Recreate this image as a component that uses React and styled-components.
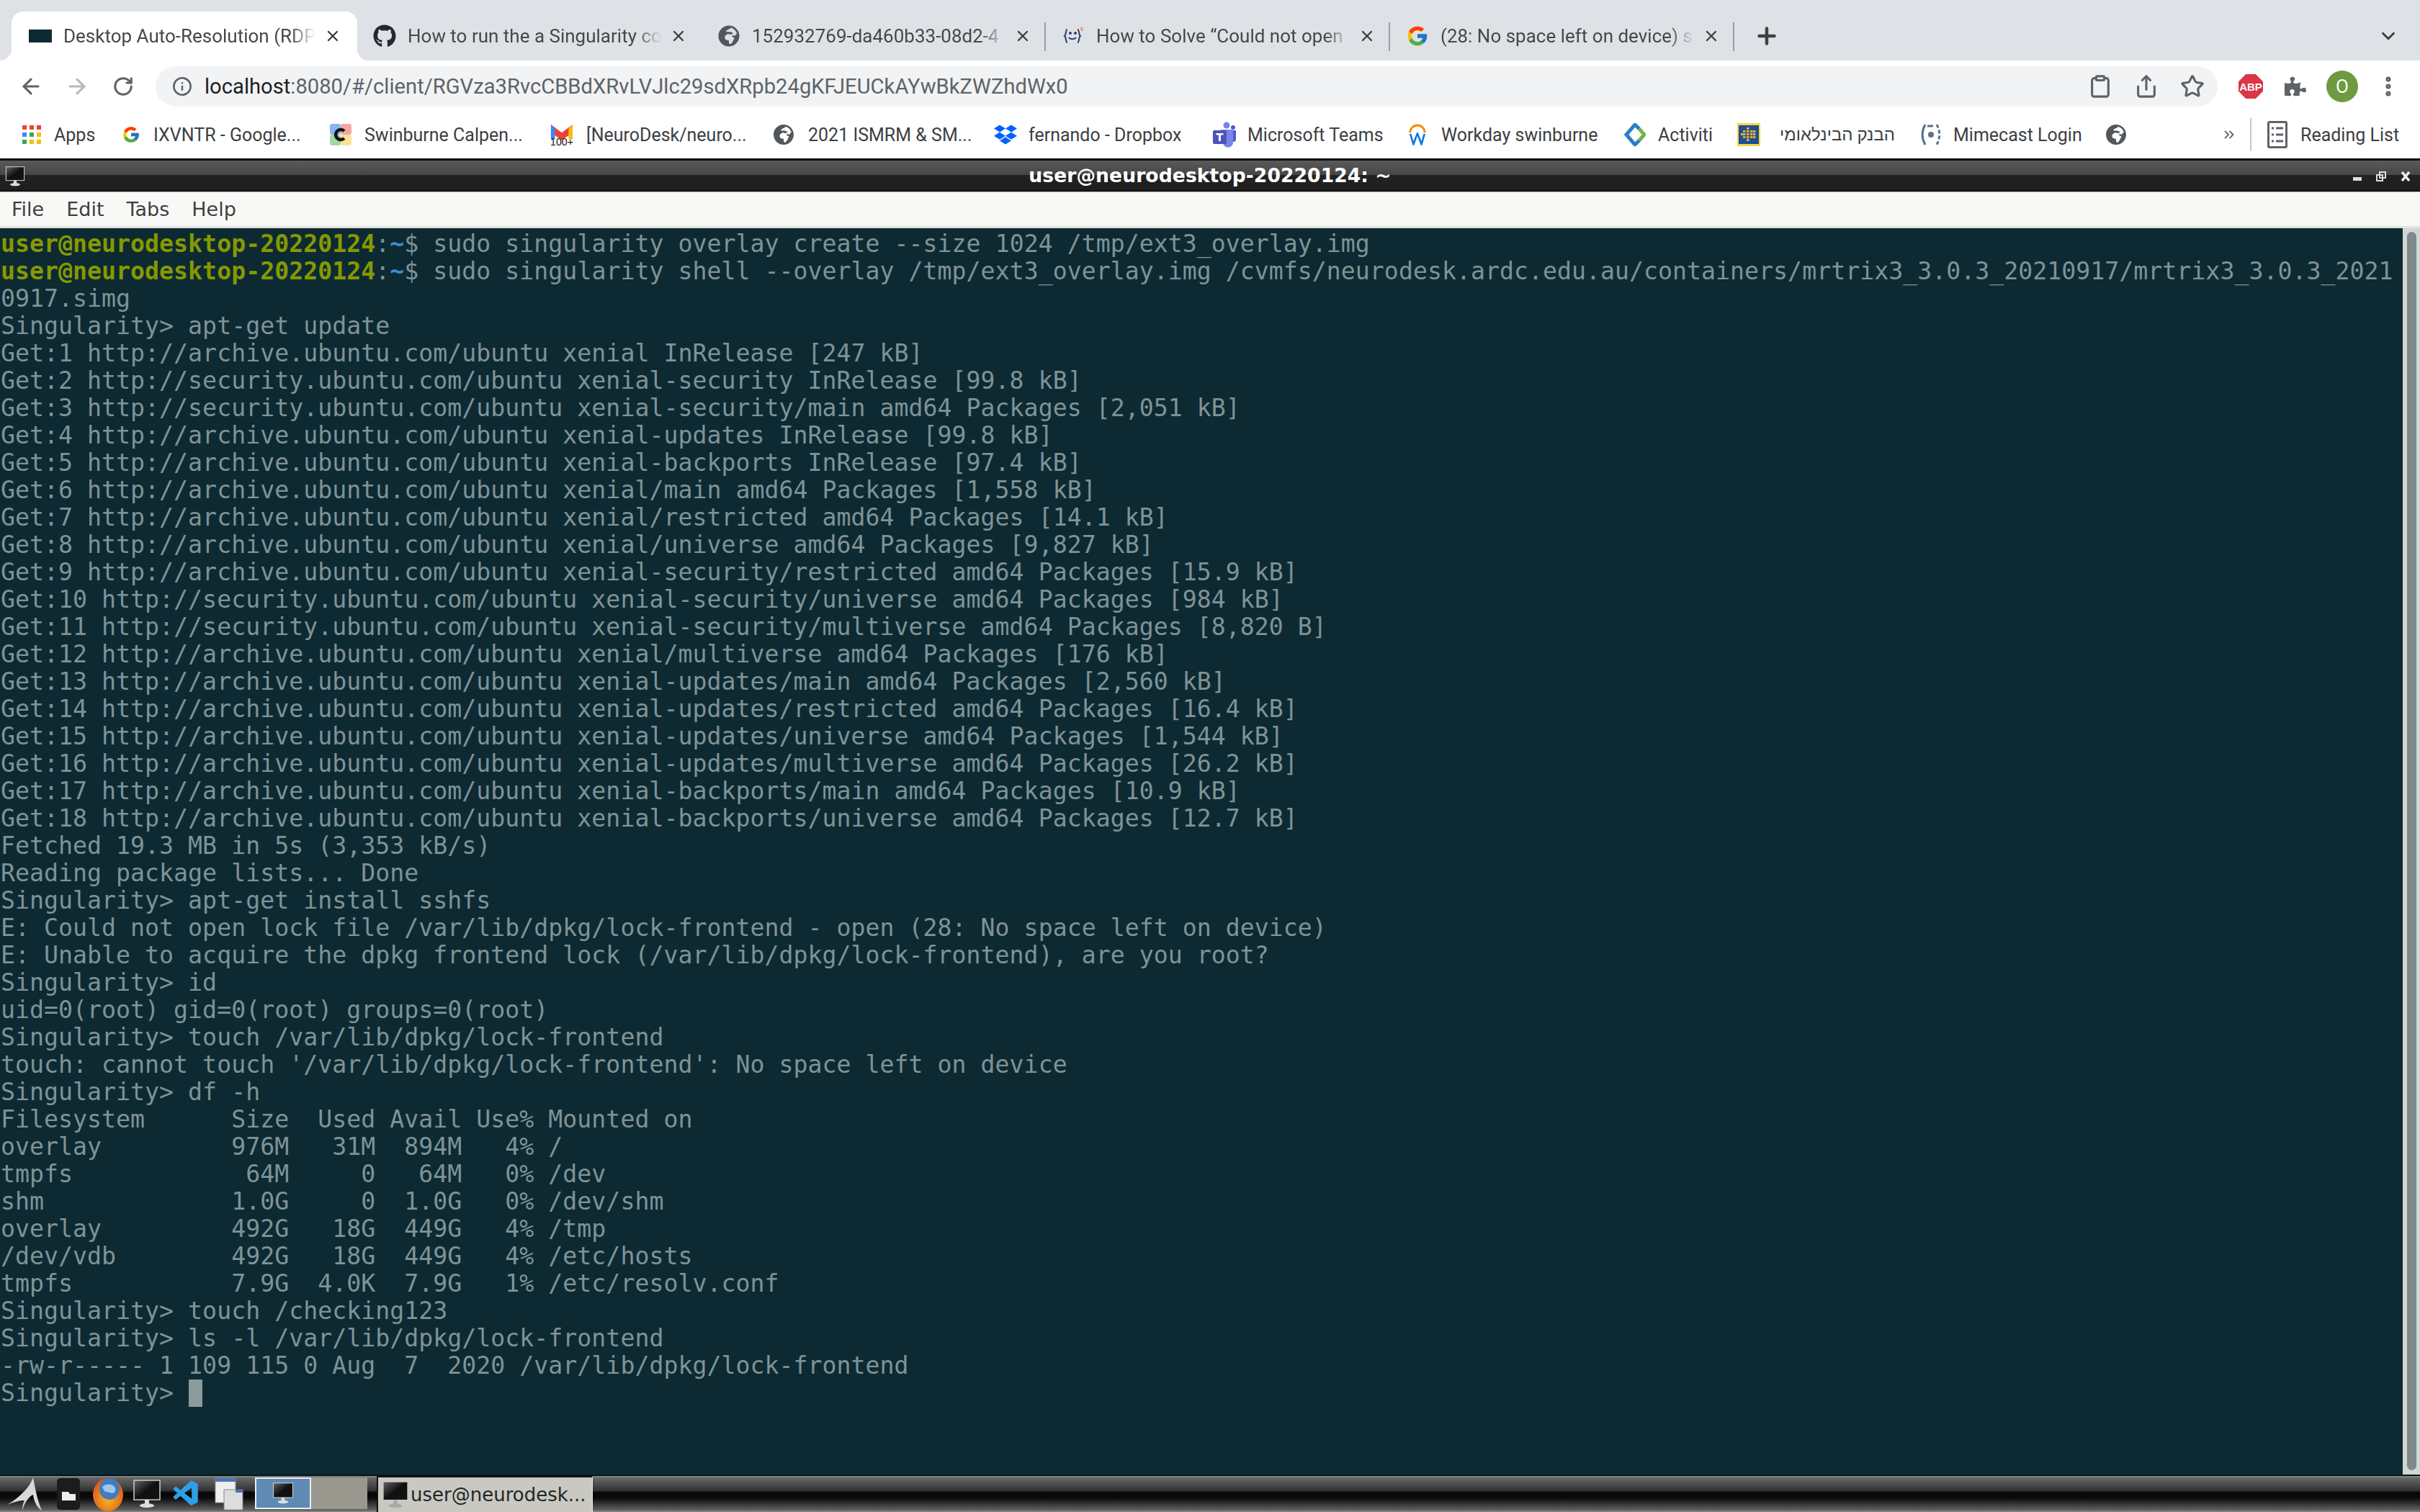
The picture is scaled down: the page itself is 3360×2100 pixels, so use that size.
import React from "react";
import styled, { createGlobalStyle } from "styled-components";
import { ArrowLeft, ArrowRight, RotateCw, Info, Plus, X, ChevronDown, Star, Share, Clipboard, EllipsisVertical, ChevronsRight } from "lucide-react";
import { FaGithub, FaGlobeAfrica, FaPuzzlePiece, FaDropbox } from "react-icons/fa";
import { FcGoogle } from "react-icons/fc";
import { VscVscode } from "react-icons/vsc";

const Global = createGlobalStyle`
  html, body { margin: 0; padding: 0; background: #0d2a33; }
  #root { width: 3360px; height: 2100px; overflow: hidden; }
`;

const Page = styled.div`
  width: 3360px; height: 2100px; display: flex; flex-direction: column;
  font-family: Roboto, "Liberation Sans", sans-serif;
`;
const TabStrip = styled.div`
  height: 84px; background: #dee1e6; display: flex; align-items: flex-end; padding-left: 16px; box-sizing: border-box;
`;
const Tab = styled.div`
  position: relative; width: ${p => p.$active ? 480 : 478}px; height: 68px; box-sizing: border-box;
  padding: 0 ${p => p.$active ? 22 : 20}px 0 ${p => p.$active ? 24 : 22}px;
  display: flex; align-items: center; gap: 16px;
  background: ${p => p.$active ? "#fff" : "transparent"};
  border-radius: 16px 16px 0 0;
  color: #45474b;
  ${p => p.$active && `
    &::before, &::after { content: ""; position: absolute; bottom: 0; width: 16px; height: 16px; background: radial-gradient(circle at var(--cx) 0, #dee1e6 15.5px, #fff 16.5px); }
    &::before { left: -16px; --cx: 0; }
    &::after { right: -16px; --cx: 100%; }
  `}
  ${p => p.$sep && `
    &::after { content: ""; position: absolute; right: 0; top: 15px; height: 40px; width: 2px; background: #9c9fa4; }
  `}
`;
const TabIcon = styled.span`
  width: 32px; height: 32px; flex: none; display: flex; align-items: center; justify-content: center;
`;
const TabTitle = styled.span`
  flex: 1; min-width: 0; white-space: nowrap; font-size: 26px; color: #45474b;
  -webkit-mask-image: linear-gradient(to right, #000 90%, transparent 100%);
  mask-image: linear-gradient(to right, #000 90%, transparent 100%);
`;
const TabClose = styled.span`
  width: 24px; flex: none; display: flex; justify-content: center; color: #3c4043; margin-left: -4px;
`;
const NewTab = styled.div`
  margin-left: 27px; height: 68px; display: flex; align-items: center; color: #3c4043;
`;
const Spacer = styled.div`flex: 1;`;
const StripEnd = styled.div`
  height: 68px; display: flex; align-items: center; color: #3c4043; padding-right: 29px;
`;

const Toolbar = styled.div`
  height: 64px; background: #fff; display: flex; align-items: flex-start; box-sizing: border-box; padding-top: 8px;
`;
const NavBtn = styled.div`
  width: 64px; height: 56px; display: flex; align-items: center; justify-content: center; color: ${p => p.$dim ? "#b6b8bb" : "#5f6368"};
`;
const NavGroup = styled.div`
  display: flex; padding-left: 11px; width: 216px; box-sizing: border-box; flex: none;
`;
const Omnibox = styled.div`
  width: 2863px; height: 56px; border-radius: 28px; background: #f1f3f4; display: flex; align-items: center; flex: none;
  padding: 0 18px 0 23px; box-sizing: border-box; color: #5f6368;
`;
const Url = styled.div`
  flex: 1; margin-left: 17px; font-size: 29.2px; color: #5f6368; white-space: nowrap; b { font-weight: 400; color: #202124; }
`;
const OmniActions = styled.div`display: flex; gap: 30px; align-items: center;`;
const ExtGroup = styled.div`
  flex: 1; display: flex; align-items: center; height: 56px; gap: 30px; padding-left: 29px;
`;
const Abp = styled.div`
  width: 34px; height: 34px; background: #dc3545; color: #fff; display: flex; align-items: center; justify-content: center;
  clip-path: polygon(30% 0, 70% 0, 100% 30%, 100% 70%, 70% 100%, 30% 100%, 0 70%, 0 30%);
  font: 700 15px "Liberation Sans", sans-serif;
`;
const Avatar = styled.div`
  width: 44px; height: 44px; border-radius: 50%; background: #6f9a41; color: #fff; display: flex; align-items: center; justify-content: center;
  font-size: 26px; margin: 0 -5px 0 -2px;
`;

const Bookmarks = styled.div`
  height: 72px; background: #fff; display: flex; align-items: center; padding: 6px 0 0 31px; box-sizing: border-box; color: #3c4043;
`;
const Bm = styled.div`
  display: flex; align-items: center; gap: ${p => p.$gap ?? 18}px; margin-right: ${p => p.$mr ?? 34}px; font-size: 25px; white-space: nowrap; flex: none;
`;
const BmIcon = styled.span`
  width: ${p => p.$w ?? 30}px; height: 32px; flex: none; display: flex; align-items: center; justify-content: center;
`;
const BmText = styled.span`
  width: ${p => p.$w}px; color: #3c4043; white-space: nowrap; direction: ${p => p.$rtl ? "rtl" : "ltr"};
  font-size: ${p => p.$rtl ? "24px" : "inherit"};
`;
const BmSep = styled.div`width: 2px; height: 46px; background: #c4c7c9; margin: 0 22px 0 18px;`;
const More = styled.div`color: #5f6368; flex: none; margin-left: auto; display: flex;`;

const Desktop = styled.div`
  flex: 1; display: flex; flex-direction: column; min-height: 0;
`;
const WindowTitle = styled.div`
  height: 46px; box-sizing: border-box; border-top: 3px solid #0c0c0c; border-bottom: 2px solid #111;
  position: relative; display: flex; align-items: center; justify-content: center;
  background: linear-gradient(#5a5a5a 0, #464646 48%, #222 50%, #1e1e1e 100%);
  color: #fff; font: 700 26.7px "DejaVu Sans", sans-serif; box-shadow: 0 1px 0 #b4b4b4;
`;
const WinIcon = styled.span`position: absolute; left: 7px; top: 8px; display: flex;`;
const WinBtns = styled.span`position: absolute; right: 13px; top: 15px; display: flex; gap: 20px; align-items: center;`;
const MenuBar = styled.div`
  height: 50px; box-sizing: border-box; margin-top: 1px; background: #f8f9f6; border-bottom: 3px solid #e3e4e1; display: flex; align-items: center; gap: 31px;
  padding-left: 16px; font: 400 27px "DejaVu Sans", sans-serif; color: #3f3f3f;
`;
const TermArea = styled.div`
  flex: 1; min-height: 0; display: flex; background: #0d2a33; border-bottom: 2px solid #06141a;
`;
const Term = styled.pre`
  flex: 1; margin: 0; padding: 3px 0 0 1px; font: 400 33.24px/38px "DejaVu Sans Mono", monospace; color: #7f9396; overflow: hidden;
`;
const U = styled.span`color: #859900; font-weight: 700;`;
const B = styled.span`color: #3c8dd0; font-weight: 700;`;
const Cursor = styled.span`
  display: inline-block; width: 19px; height: 38px; background: #8b9a9b; vertical-align: top; margin-left: 1px;
`;
const ScrollTrack = styled.div`
  width: 24px; background: #d3d5d2; padding: 5px 5px 6px 6px; box-sizing: border-box; display: flex;
`;
const ScrollThumb = styled.div`
  flex: 1; border-radius: 7px; background: #7e8a8b;
`;
const Panel = styled.div`
  height: 50px; flex: none; display: flex; align-items: stretch;
  background: linear-gradient(#8a8a8a 0, #666 3px, #333 20px, #070707 23px, #0a0a0a 30px, #5e5e5e 47px, #8f8f8f 50px);
  padding-left: 8px; box-sizing: border-box;
`;
const PanelIcon = styled.div`
  width: ${p => p.$w}px; margin-right: ${p => p.$mr ?? 0}px; flex: none; display: flex; align-items: center; justify-content: center;
`;
const Pager = styled.div`
  width: 78px; margin: 2px 0 4px; flex: none; box-sizing: border-box;
  background: ${p => p.$active ? "#5e8ab4" : "#98988e"}; border: ${p => p.$active ? "2px solid #e8eef4" : "0"};
  display: flex; align-items: center; justify-content: center;
`;
const TaskBtn = styled.div`
  width: 300px; margin-left: 13px; background: #c9c9c1; border-top: 2px solid #111; border-left: 2px solid #111; border-right: 1px solid #eee;
  box-sizing: border-box; display: flex; align-items: center; padding-left: 5px; gap: 2px;
  font: 400 26px "DejaVu Sans", sans-serif; color: #22262b; white-space: nowrap;
`;

const Monitor = ({ s = 40, stand = "#ddd" }) => (
  <svg width={s} height={s} viewBox="0 0 40 40">
    <defs><linearGradient id="mon" x1="0" y1="0" x2="1" y2="1"><stop offset="0" stopColor="#666" /><stop offset=".5" stopColor="#111" /></linearGradient></defs>
    <rect x="2" y="1" width="36" height="27" fill="url(#mon)" stroke="#ccc" strokeWidth="1.5" />
    <rect x="17" y="28" width="6" height="6" fill={stand} />
    <ellipse cx="20" cy="36" rx="10" ry="3" fill={stand} />
  </svg>
);

const Globe = ({ s = 30 }) => <FaGlobeAfrica size={s} color="#53575c" />;

const GmailIcon = () => (
  <svg width="34" height="34" viewBox="0 0 34 34">
    <path d="M1 2 L17 14 L33 2 V14 L17 25 L1 14Z" fill="#ea4335" />
    <path d="M1 2v22h6V8z" fill="#4285f4" />
    <path d="M33 2v22h-6V8z" fill="#fbbc04" />
    <text x="17" y="33" textAnchor="middle" fontFamily="Liberation Sans" fontSize="15" fill="#111">100+</text>
  </svg>
);
const AppsIcon = () => (
  <svg width="26" height="26" viewBox="0 0 26 26">
    {[["#ea4335", "#ea4335", "#ea4335"], ["#4285f4", "#34a853", "#fbbc04"], ["#34a853", "#fbbc04", "#fbbc04"]].map((r, j) => r.map((c, i) => (
      <rect key={`${i}${j}`} x={i * 10} y={j * 10} width="6" height="6" fill={c} />
    )))}
  </svg>
);
const CalIcon = () => (
  <svg width="30" height="30" viewBox="0 0 30 30">
    <rect width="15" height="15" rx="3" fill="#8ab4f8" /><rect x="15" width="15" height="15" rx="3" fill="#f4a7a0" />
    <rect y="15" width="15" height="15" rx="3" fill="#a5d6a7" /><rect x="15" y="15" width="15" height="15" rx="3" fill="#fde293" />
    <path d="M20 10a7 7 0 1 0 0 10" fill="none" stroke="#111" strokeWidth="4.5" />
  </svg>
);
const TeamsIcon = () => (
  <svg width="32" height="36" viewBox="0 0 32 36">
    <circle cx="19" cy="5" r="4.5" fill="#7b83eb" /><circle cx="28" cy="8" r="3" fill="#5059c9" />
    <path d="M24 12h8v12a4 4 0 0 1-8 0z" fill="#5059c9" /><path d="M11 11h17v16a7 7 0 0 1-14 3H11z" fill="#7b83eb" />
    <rect x="0" y="12" width="19" height="19" rx="2" fill="#4b53bc" />
    <path d="M4.5 16h10v2.5h-3.5V27H8v-8.500H4.500z" fill="#fff" />
  </svg>
);
const WorkdayIcon = () => (
  <svg width="28" height="34" viewBox="0 0 28 34">
    <path d="M3 14a11 11 0 0 1 22 0" fill="none" stroke="#f38b00" strokeWidth="3" />
    <path d="M2 16l5 17h2l5-14 5 14h2l5-17h-3l-3 11-5-13h-2l-5 13-3-11z" fill="#0875e1" />
  </svg>
);
const ActivitiIcon = () => (
  <svg width="30" height="32" viewBox="0 0 30 32" fill="none" strokeWidth="5">
    <path d="M21 8L15 2 3 16l12 14 6-6" stroke="#2b7ec7" />
    <path d="M21 8l7 8-7 8" stroke="#6fb548" />
  </svg>
);
const BankIcon = () => (
  <svg width="32" height="32" viewBox="0 0 32 32">
    <rect width="32" height="32" fill="#f6d54a" /><rect x="2" y="3" width="28" height="26" fill="#1c4f93" />
    <g fill="#e8a93a">
      {[[13, 6], [13, 10], [13, 14], [13, 18], [13, 22], [8, 10], [8, 14], [8, 18], [18, 10], [18, 14], [18, 18], [5, 14], [22, 14], [22, 10], [22, 18]].map(([x, y]) => <rect key={`${x}-${y}`} x={x} y={y} width="3.500" height="3" />)}
    </g>
  </svg>
);
const MimecastIcon = () => (
  <svg width="28" height="34" viewBox="0 0 28 34" fill="none" stroke="#5c7186" strokeWidth="3">
    <path d="M6 3C1 12 1 22 6 31" /><path d="M22 3c5 9 5 19 0 28" strokeDasharray="5 3" /><path d="M9 5h8" />
    <circle cx="14" cy="17" r="4" fill="#5c7186" stroke="none" />
  </svg>
);
const ReadingIcon = () => (
  <svg width="28" height="38" viewBox="0 0 28 38" fill="none" stroke="#5f6368" strokeWidth="3">
    <rect x="1.500" y="1.500" width="25" height="35" rx="1.500" />
    <path d="M6 10h3M12 10h10M6 19h3M12 19h10M6 28h3M12 28h10" />
  </svg>
);
const SoIcon = () => (
  <svg width="32" height="32" viewBox="0 0 32 32" fill="none" stroke="#2c3e66" strokeWidth="2">
    <path d="M8 7c-3 0-1 7-4 9 3 2 1 9 4 9M22 7c3 0 1 7 4 9-3 2-1 9-4 9" />
    <path d="M10 18c2 3 8 3 10 0" /><circle cx="12" cy="12" r="1" /><circle cx="19" cy="12" r="1" />
    <path d="M26 1l1 4 3-2-2 4 3 1-4 1z" fill="#f27f2c" stroke="none" />
  </svg>
);
const ArrowLogo = () => (
  <svg width="56" height="46" viewBox="0 0 56 46">
    <path d="M38 0C34 12 22 26 2 38c12-5 18-6 24-6-2 4-3 8-3 14 3-12 10-20 15-22 1 10 6 18 12 22-6-14-9-30-12-46z" fill="#d8d8d8" />
  </svg>
);
const FileMgr = () => (
  <svg width="34" height="46" viewBox="0 0 34 46">
    <rect x="1" y="1" width="32" height="44" rx="5" fill="#1c1c1c" />
    <path d="M8 20h9l2 3h8v9H8z" fill="#eee" />
  </svg>
);
const FirefoxIcon = () => (
  <svg width="44" height="48" viewBox="0 0 44 48">
    <defs><radialGradient id="ff" cx=".5" cy=".65" r=".7"><stop offset="0" stopColor="#f5b324" /><stop offset="1" stopColor="#d8491b" /></radialGradient></defs>
    <ellipse cx="22" cy="25" rx="21" ry="23" fill="url(#ff)" />
    <ellipse cx="24" cy="17" rx="14" ry="15" fill="#3f7cc2" />
    <path d="M14 14c6-6 16-4 18 2s-4 8-8 6-6 2-10-8z" fill="#9ec6ea" />
  </svg>
);
const WindowsIcon = () => (
  <svg width="40" height="46" viewBox="0 0 40 46">
    <rect x="1" y="1" width="28" height="34" fill="#eee" stroke="#999" />
    <rect x="1" y="1" width="28" height="5" fill="#4a74b4" />
    <rect x="13" y="17" width="26" height="28" fill="#ddd" stroke="#888" />
    <rect x="29" y="17" width="10" height="4" fill="#4a74b4" />
  </svg>
);

const tabs = [
  { title: "Desktop Auto-Resolution (RDP", active: true, icon: <svg width="32" height="18"><rect width="32" height="18" fill="#0d2a33" /></svg> },
  { title: "How to run the a Singularity co", icon: <FaGithub size={32} color="#24292f" /> },
  { title: "152932769-da460b33-08d2-4", sep: true, icon: <Globe />, },
  { title: "How to Solve “Could not open", sep: true, icon: <SoIcon /> },
  { title: "(28: No space left on device) s", sep: true, icon: <FcGoogle size={32} /> },
];

const marks = [
  { t: "Apps", i: <AppsIcon />, w: 26, tw: 57, mr: 37 },
  { t: "IXVNTR - Google...", i: <FcGoogle size={28} />, w: 26, tw: 211, mr: 34 },
  { t: "Swinburne Calpen...", i: <CalIcon />, w: 30, tw: 224, mr: 34 },
  { t: "[NeuroDesk/neuro...", i: <GmailIcon />, w: 32, tw: 224, mr: 36 },
  { t: "2021 ISMRM & SM...", i: <Globe />, w: 28, tw: 225, mr: 33, gap: 20 },
  { t: "fernando - Dropbox", i: <FaDropbox size={32} color="#0061fe" />, w: 32, tw: 222, mr: 34, gap: 16 },
  { t: "Microsoft Teams", i: <TeamsIcon />, w: 32, tw: 187, mr: 36, gap: 16 },
  { t: "Workday swinburne", i: <WorkdayIcon />, w: 26, tw: 221, mr: 33, gap: 20 },
  { t: "Activiti", i: <ActivitiIcon />, w: 30, tw: 77, mr: 33, gap: 17 },
  { t: "הבנק הבינלאומי", i: <BankIcon />, w: 32, tw: 171, mr: 36, gap: 16, rtl: true },
  { t: "Mimecast Login", i: <MimecastIcon />, w: 28, tw: 178, mr: 34, gap: 17 },
];

const lines = [
  ["p", " sudo singularity overlay create --size 1024 /tmp/ext3_overlay.img"],
  ["p", " sudo singularity shell --overlay /tmp/ext3_overlay.img /cvmfs/neurodesk.ardc.edu.au/containers/mrtrix3_3.0.3_20210917/mrtrix3_3.0.3_2021"],
  "0917.simg",
  "Singularity> apt-get update",
  "Get:1 http://archive.ubuntu.com/ubuntu xenial InRelease [247 kB]",
  "Get:2 http://security.ubuntu.com/ubuntu xenial-security InRelease [99.8 kB]",
  "Get:3 http://security.ubuntu.com/ubuntu xenial-security/main amd64 Packages [2,051 kB]",
  "Get:4 http://archive.ubuntu.com/ubuntu xenial-updates InRelease [99.8 kB]",
  "Get:5 http://archive.ubuntu.com/ubuntu xenial-backports InRelease [97.4 kB]",
  "Get:6 http://archive.ubuntu.com/ubuntu xenial/main amd64 Packages [1,558 kB]",
  "Get:7 http://archive.ubuntu.com/ubuntu xenial/restricted amd64 Packages [14.1 kB]",
  "Get:8 http://archive.ubuntu.com/ubuntu xenial/universe amd64 Packages [9,827 kB]",
  "Get:9 http://archive.ubuntu.com/ubuntu xenial-security/restricted amd64 Packages [15.9 kB]",
  "Get:10 http://security.ubuntu.com/ubuntu xenial-security/universe amd64 Packages [984 kB]",
  "Get:11 http://security.ubuntu.com/ubuntu xenial-security/multiverse amd64 Packages [8,820 B]",
  "Get:12 http://archive.ubuntu.com/ubuntu xenial/multiverse amd64 Packages [176 kB]",
  "Get:13 http://archive.ubuntu.com/ubuntu xenial-updates/main amd64 Packages [2,560 kB]",
  "Get:14 http://archive.ubuntu.com/ubuntu xenial-updates/restricted amd64 Packages [16.4 kB]",
  "Get:15 http://archive.ubuntu.com/ubuntu xenial-updates/universe amd64 Packages [1,544 kB]",
  "Get:16 http://archive.ubuntu.com/ubuntu xenial-updates/multiverse amd64 Packages [26.2 kB]",
  "Get:17 http://archive.ubuntu.com/ubuntu xenial-backports/main amd64 Packages [10.9 kB]",
  "Get:18 http://archive.ubuntu.com/ubuntu xenial-backports/universe amd64 Packages [12.7 kB]",
  "Fetched 19.3 MB in 5s (3,353 kB/s)",
  "Reading package lists... Done",
  "Singularity> apt-get install sshfs",
  "E: Could not open lock file /var/lib/dpkg/lock-frontend - open (28: No space left on device)",
  "E: Unable to acquire the dpkg frontend lock (/var/lib/dpkg/lock-frontend), are you root?",
  "Singularity> id",
  "uid=0(root) gid=0(root) groups=0(root)",
  "Singularity> touch /var/lib/dpkg/lock-frontend",
  "touch: cannot touch '/var/lib/dpkg/lock-frontend': No space left on device",
  "Singularity> df -h",
  "Filesystem      Size  Used Avail Use% Mounted on",
  "overlay         976M   31M  894M   4% /",
  "tmpfs            64M     0   64M   0% /dev",
  "shm             1.0G     0  1.0G   0% /dev/shm",
  "overlay         492G   18G  449G   4% /tmp",
  "/dev/vdb        492G   18G  449G   4% /etc/hosts",
  "tmpfs           7.9G  4.0K  7.9G   1% /etc/resolv.conf",
  "Singularity> touch /checking123",
  "Singularity> ls -l /var/lib/dpkg/lock-frontend",
  "-rw-r----- 1 109 115 0 Aug  7  2020 /var/lib/dpkg/lock-frontend",
];

export default function App() {
  return (
    <Page>
      <Global />
      <TabStrip>
        {tabs.map(t => (
          <Tab key={t.title} $active={t.active} $sep={t.sep}>
            <TabIcon>{t.icon}</TabIcon>
            <TabTitle>{t.title}</TabTitle>
            <TabClose><X size={26} strokeWidth={2.4} /></TabClose>
          </Tab>
        ))}
        <NewTab><Plus size={36} strokeWidth={3} /></NewTab>
        <Spacer />
        <StripEnd><ChevronDown size={30} strokeWidth={2.4} /></StripEnd>
      </TabStrip>
      <Toolbar>
        <NavGroup>
          <NavBtn><ArrowLeft size={34} strokeWidth={2.2} /></NavBtn>
          <NavBtn $dim><ArrowRight size={34} strokeWidth={2.2} /></NavBtn>
          <NavBtn><RotateCw size={30} strokeWidth={2.4} /></NavBtn>
        </NavGroup>
        <Omnibox>
          <Info size={28} strokeWidth={2.2} />
          <Url><b>localhost</b>:8080/#/client/RGVza3RvcCBBdXRvLVJlc29sdXRpb24gKFJEUCkAYwBkZWZhdWx0</Url>
          <OmniActions>
            <Clipboard size={34} strokeWidth={2.2} />
            <Share size={34} strokeWidth={2.2} />
            <Star size={34} strokeWidth={2.2} />
          </OmniActions>
        </Omnibox>
        <ExtGroup>
          <Abp>ABP</Abp>
          <FaPuzzlePiece size={30} color="#5f6368" />
          <Avatar>O</Avatar>
          <EllipsisVertical size={34} color="#5f6368" strokeWidth={3} />
        </ExtGroup>
      </Toolbar>
      <Bookmarks>
        {marks.map(m => (
          <Bm key={m.t} $mr={m.mr} $gap={m.gap}>
            <BmIcon $w={m.w}>{m.i}</BmIcon>
            <BmText $w={m.tw} $rtl={m.rtl}>{m.t}</BmText>
          </Bm>
        ))}
        <Bm $mr={0}><BmIcon $w={28}><Globe /></BmIcon></Bm>
        <More><ChevronsRight size={22} /></More>
        <BmSep />
        <Bm $mr={27}><BmIcon $w={28}><ReadingIcon /></BmIcon><BmText $w={139}>Reading List</BmText></Bm>
      </Bookmarks>
      <Desktop>
        <WindowTitle>
          <WinIcon><Monitor s={28} /></WinIcon>
          user@neurodesktop-20220124: ~
          <WinBtns>
            <svg width="12" height="14"><rect y="8" width="12" height="5" fill="#ddd" /></svg>
            <svg width="14" height="14" viewBox="0 0 14 14" fill="none" stroke="#ddd" strokeWidth="2"><rect x="5" y="1" width="8" height="8" /><rect x="1" y="5" width="8" height="8" /></svg>
            <svg width="14" height="14" viewBox="0 0 14 14" stroke="#eee" strokeWidth="3.500"><path d="M2 1l10 12M12 1L2 13" /></svg>
          </WinBtns>
        </WindowTitle>
        <MenuBar><span>File</span><span>Edit</span><span>Tabs</span><span>Help</span></MenuBar>
        <TermArea>
          <Term>
            {lines.map(l => Array.isArray(l)
              ? <React.Fragment key={l[1]}><U>user@neurodesktop-20220124</U>:<B>~</B>${l[1]}{"\n"}</React.Fragment>
              : <React.Fragment key={l}>{l}{"\n"}</React.Fragment>)}
            Singularity&gt; <Cursor />
          </Term>
          <ScrollTrack><ScrollThumb /></ScrollTrack>
        </TermArea>
        <Panel>
          <PanelIcon $w={56} $mr={14}><ArrowLogo /></PanelIcon>
          <PanelIcon $w={34} $mr={16}><FileMgr /></PanelIcon>
          <PanelIcon $w={44} $mr={12}><FirefoxIcon /></PanelIcon>
          <PanelIcon $w={40} $mr={14}><Monitor s={44} /></PanelIcon>
          <PanelIcon $w={42} $mr={18}><VscVscode size={44} color="#2d9fe6" /></PanelIcon>
          <PanelIcon $w={40} $mr={16}><WindowsIcon /></PanelIcon>
          <Pager $active><Monitor s={30} /></Pager>
          <Pager />
          <TaskBtn><Monitor s={38} stand="#aaa" /><span>user@neurodesk...</span></TaskBtn>
        </Panel>
      </Desktop>
    </Page>
  );
}
